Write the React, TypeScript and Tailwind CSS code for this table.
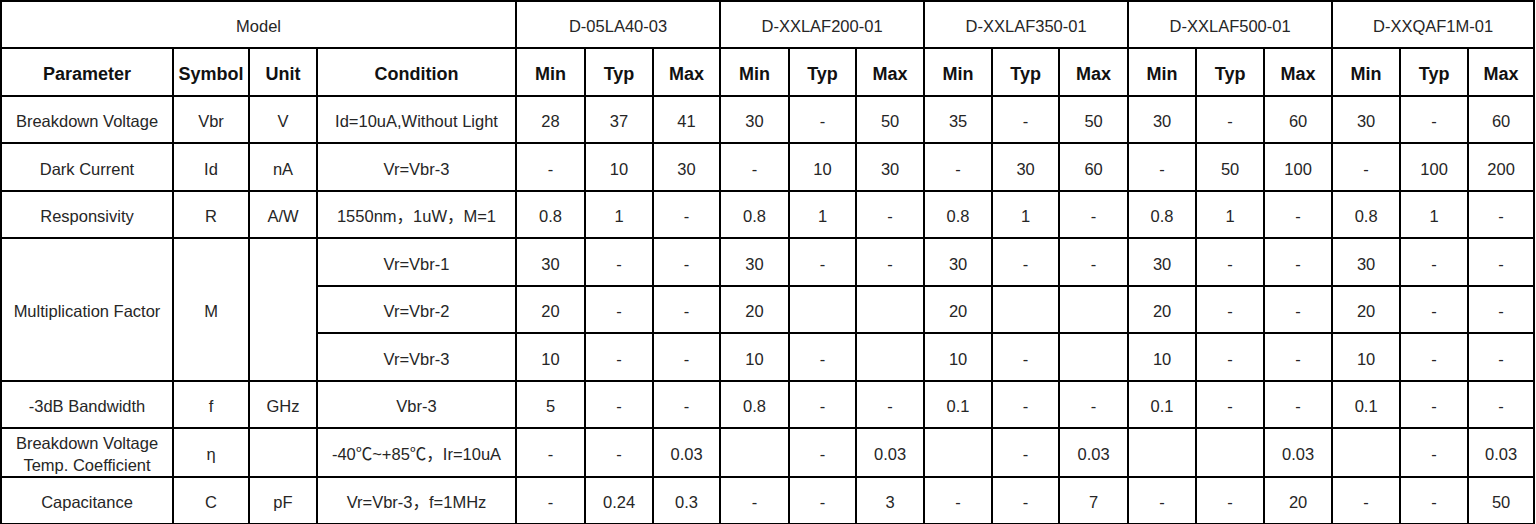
import React from "react";

const models = ["D-05LA40-03", "D-XXLAF200-01", "D-XXLAF350-01", "D-XXLAF500-01", "D-XXQAF1M-01"];

const colW = [
  "w-[172px]", "w-[76px]", "w-[68px]", "w-[199px]",
  "w-[69px]", "w-[68px]", "w-[67px]",
  "w-[69px]", "w-[67px]", "w-[68px]",
  "w-[68px]", "w-[67px]", "w-[69px]",
  "w-[68px]", "w-[68px]", "w-[68px]",
  "w-[68px]", "w-[68px]", "w-[66px]",
];

type Row = {
  param?: React.ReactNode;
  symbol?: string;
  unit?: string;
  span?: number;
  cond: string;
  vals: string[];
};

const rows: Row[] = [
  { param: "Breakdown Voltage", symbol: "Vbr", unit: "V", cond: "Id=10uA,Without Light", vals: ["28", "37", "41", "30", "-", "50", "35", "-", "50", "30", "-", "60", "30", "-", "60"] },
  { param: "Dark Current", symbol: "Id", unit: "nA", cond: "Vr=Vbr-3", vals: ["-", "10", "30", "-", "10", "30", "-", "30", "60", "-", "50", "100", "-", "100", "200"] },
  { param: "Responsivity", symbol: "R", unit: "A/W", cond: "1550nm，1uW，M=1", vals: ["0.8", "1", "-", "0.8", "1", "-", "0.8", "1", "-", "0.8", "1", "-", "0.8", "1", "-"] },
  { param: "Multiplication Factor", symbol: "M", unit: "", span: 3, cond: "Vr=Vbr-1", vals: ["30", "-", "-", "30", "-", "-", "30", "-", "-", "30", "-", "-", "30", "-", "-"] },
  { cond: "Vr=Vbr-2", vals: ["20", "-", "-", "20", "", "", "20", "", "", "20", "-", "-", "20", "-", "-"] },
  { cond: "Vr=Vbr-3", vals: ["10", "-", "-", "10", "-", "", "10", "-", "", "10", "-", "-", "10", "-", "-"] },
  { param: "-3dB Bandwidth", symbol: "f", unit: "GHz", cond: "Vbr-3", vals: ["5", "-", "-", "0.8", "-", "-", "0.1", "-", "-", "0.1", "-", "-", "0.1", "-", "-"] },
  {
    param: (
      <>
        Breakdown Voltage
        <br />
        Temp. Coefficient
      </>
    ),
    symbol: "η",
    unit: "",
    cond: "-40℃~+85℃，Ir=10uA",
    vals: ["-", "-", "0.03", "", "-", "0.03", "", "-", "0.03", "", "", "0.03", "", "-", "0.03"],
  },
  { param: "Capacitance", symbol: "C", unit: "pF", cond: "Vr=Vbr-3，f=1MHz", vals: ["-", "0.24", "0.3", "-", "-", "3", "-", "-", "7", "-", "-", "20", "-", "-", "50"] },
];

const td = "border-2 border-black text-center align-middle px-0 pb-0 pt-[3px]";

export default function App() {
  return (
    <div className="bg-white w-[1536px] h-[524px] overflow-hidden">
      <table
        className="w-[1535px] table-fixed border-collapse text-[16.5px] leading-[22px] text-[#262626]"
        style={{ fontFamily: '"Liberation Sans", Arial, "Noto Sans CJK SC", sans-serif' }}
      >
        <colgroup>
          {colW.map((w, i) => (
            <col key={i} className={w} />
          ))}
        </colgroup>
        <tbody>
          <tr className="h-[47px]">
            <td className={td} colSpan={4}>Model</td>
            {models.map((m) => (
              <td key={m} className={td} colSpan={3}>{m}</td>
            ))}
          </tr>
          <tr className="h-[48px] font-bold text-[18px] text-[#111]">
            <td className={td}>Parameter</td>
            <td className={td}>Symbol</td>
            <td className={td}>Unit</td>
            <td className={td}>Condition</td>
            {models.map((m) => (
              <React.Fragment key={m}>
                <td className={td}>Min</td>
                <td className={td}>Typ</td>
                <td className={td}>Max</td>
              </React.Fragment>
            ))}
          </tr>
          {rows.map((r, i) => (
            <tr key={i} className={i % 2 === 0 ? "h-[47px]" : "h-[48px]"}>
              {r.param !== undefined && (
                <>
                  <td className={td} rowSpan={r.span ?? 1}>{r.param}</td>
                  <td className={td} rowSpan={r.span ?? 1}>{r.symbol}</td>
                  <td className={td} rowSpan={r.span ?? 1}>{r.unit}</td>
                </>
              )}
              <td className={td}>{r.cond}</td>
              {r.vals.map((v, j) => (
                <td key={j} className={td}>{v}</td>
              ))}
            </tr>
          ))}
        </tbody>
      </table>
    </div>
  );
}
